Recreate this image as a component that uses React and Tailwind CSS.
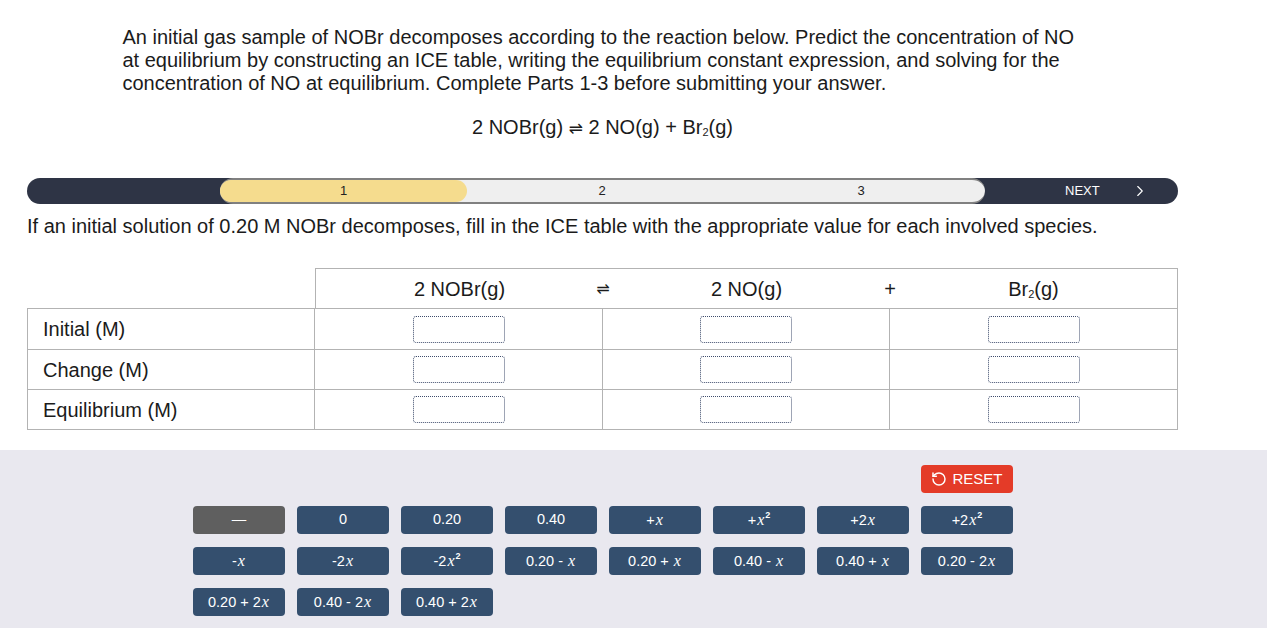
import React from 'react';
import { RotateCcw, ChevronRight } from 'lucide-react';

const X = ({ children }) => (
    <span className="italic font-['Liberation_Serif',serif] text-[16px] mx-[1px]">{children}</span>
);

const Sup2 = () => <span className="text-[9px] align-[7px] font-bold leading-none">2</span>;

const Sub2 = () => <span className="text-[11px] align-[-2px] leading-none">2</span>;

const tiles = [
    [{ gray: true, label: '—' }, { label: '0' }, { label: '0.20' }, { label: '0.40' }, { label: <>+<X>x</X></> }, { label: <>+<X>x</X><Sup2 /></> }, { label: <>+2<X>x</X></> }, { label: <>+2<X>x</X><Sup2 /></> }],
    [{ label: <>-<X>x</X></> }, { label: <>-2<X>x</X></> }, { label: <>-2<X>x</X><Sup2 /></> }, { label: <>0.20 -&nbsp;<X>x</X></> }, { label: <>0.20 +&nbsp;<X>x</X></> }, { label: <>0.40 -&nbsp;<X>x</X></> }, { label: <>0.40 +&nbsp;<X>x</X></> }, { label: <>0.20 - 2<X>x</X></> }],
    [{ label: <>0.20 + 2<X>x</X></> }, { label: <>0.40 - 2<X>x</X></> }, { label: <>0.40 + 2<X>x</X></> }],
];

const Box = () => (
    <div className="w-[92px] h-[27px] border border-dotted border-[#3e4c6c] rounded-[3px] bg-white" />
);

const rows = ['Initial (M)', 'Change (M)', 'Equilibrium (M)'];

const App = () => {
    return (
        <div className="w-[1267px] h-[628px] bg-white text-[#1b1b1b] font-['Liberation_Sans',Arial,sans-serif] overflow-hidden flex flex-col">
            <div className="px-[27px] w-[1205px]">
                {/* Question */}
                <p className="w-[960px] mx-auto pt-[26px] text-[20px] leading-[23px]">
                    An initial gas sample of NOBr decomposes according to the reaction below. Predict the concentration of NO at equilibrium by constructing an ICE table, writing the equilibrium constant expression, and solving for the concentration of NO at equilibrium. Complete Parts 1-3 before submitting your answer.
                </p>
                <p className="mt-[21px] text-center text-[20px] leading-[23px]">
                    2 NOBr(g) <span className="font-['DejaVu_Sans',sans-serif] text-[17px]">⇌</span> 2 NO(g) + Br<Sub2 />(g)
                </p>

                {/* Progress bar */}
                <div className="mt-[38px] h-[26px] rounded-full bg-[#2e3445] flex items-stretch">
                    <div className="w-[193px]" />
                    <div className="flex-1 flex bg-[#efefef] border-y-2 border-[#808080] rounded-full text-[13px] text-[#222]">
                        <div className="w-[247px] h-full rounded-full bg-[#f5dc8e] flex items-center justify-center">1</div>
                        <div className="w-[270px] flex items-center justify-center">2</div>
                        <div className="w-[248px] flex items-center justify-center">3</div>
                    </div>
                    <div className="w-[193px] flex items-center text-white text-[13px]">
                        <span className="ml-[80px]">NEXT</span>
                        <ChevronRight className="ml-[31px] w-[18px] h-[18px]" strokeWidth={1.5} />
                    </div>
                </div>

                <p className="mt-[11px] text-[20px] leading-[23px]">
                    If an initial solution of 0.20 M NOBr decomposes, fill in the ICE table with the appropriate value for each involved species.
                </p>

                {/* ICE table */}
                <div className="mt-[30px] text-[20px]">
                    <div className="flex h-[40px]">
                        <div className="w-[288px]" />
                        <div className="flex-1 grid grid-cols-3 border border-b-0 border-[#b3b3b3]">
                            <div className="relative flex items-center justify-center">
                                2 NOBr(g)
                                <span className="absolute right-0 translate-x-1/2 font-['DejaVu_Sans',sans-serif] text-[16px]">⇌</span>
                            </div>
                            <div className="relative flex items-center justify-center">
                                2 NO(g)
                                <span className="absolute right-0 translate-x-1/2">+</span>
                            </div>
                            <div className="flex items-center justify-center"><span>Br<Sub2 />(g)</span></div>
                        </div>
                    </div>
                    <div className="border border-[#b3b3b3]">
                        {rows.map((r, i) => (
                            <div key={r} className={`grid grid-cols-[287px_288px_287px_1fr] h-[40px] ${i > 0 ? 'border-t border-[#b3b3b3]' : ''}`}>
                                <div className="flex items-center pl-[15px] border-r border-[#b3b3b3]">{r}</div>
                                <div className="flex items-center justify-center border-r border-[#b3b3b3]"><Box /></div>
                                <div className="flex items-center justify-center border-r border-[#b3b3b3]"><Box /></div>
                                <div className="flex items-center justify-center"><Box /></div>
                            </div>
                        ))}
                    </div>
                </div>
            </div>

            {/* Tile tray */}
            <div className="mt-[20px] flex-1 bg-[#e9e8ef] pt-[15px]">
                <div className="w-[820px] ml-[193px] grid grid-cols-8 gap-x-[12px] gap-y-[13px]">
                    <div className="col-start-8 h-[28px] rounded-[4px] bg-[#e43b28] text-white text-[15px] flex items-center justify-center gap-[5px]">
                        <RotateCcw className="w-[16px] h-[16px]" strokeWidth={2.2} />
                        RESET
                    </div>
                    {tiles.map((row, ri) =>
                        row.map((t, ci) => (
                            <div
                                key={`${ri}-${ci}`}
                                className={`${ci === 0 ? 'col-start-1' : ''} h-[28px] rounded-[4px] ${t.gray ? 'bg-[#5f5f5f]' : 'bg-[#344f6e]'} text-white text-[14.5px] flex items-center justify-center`}
                            >
                                <span>{t.label}</span>
                            </div>
                        ))
                    )}
                </div>
            </div>
        </div>
    );
};

export default App;
